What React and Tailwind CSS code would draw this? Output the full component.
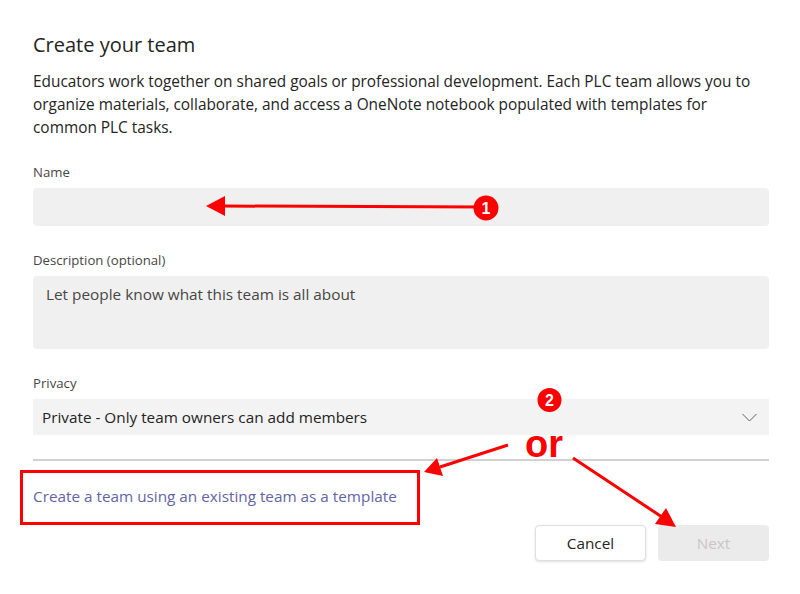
export default function App() {
  const font = { fontFamily: '"Segoe UI", "Open Sans", "Noto Sans", sans-serif' };
  return (
    <div className="relative w-[800px] h-[594px] bg-white overflow-hidden text-[#252423]" style={font}>
      <div className="pl-[33px] pr-[31px] flex flex-col">
        <div className="mt-[31px] text-[20px] leading-[28px] font-normal">Create your team</div>
        <p className="mt-[10.5px] text-[15.4px] leading-[23px] text-[#252423]">
          Educators work together on shared goals or professional development. Each PLC team allows you to organize materials, collaborate, and access a OneNote notebook populated with templates for common PLC tasks.
        </p>
        <label className="mt-[24.5px] text-[13.2px] leading-[18px] text-[#484644]">Name</label>
        <div className="mt-[7px] h-[38px] rounded-[4px] bg-[#f0f0f0]"></div>
        <label className="mt-[25px] text-[13.2px] leading-[18px] text-[#484644]">Description (optional)</label>
        <div className="mt-[7px] h-[73px] rounded-[4px] bg-[#f0f0f0] pl-[13px] pt-[7px] text-[15.35px] leading-[22px] text-[#484644]">
          Let people know what this team is all about
        </div>
        <label className="mt-[25px] text-[13.2px] leading-[18px] text-[#484644]">Privacy</label>
        <div className="mt-[7px] h-[36px] bg-[#f3f3f3] flex items-center justify-between pl-[9px] pr-[12px] text-[15.3px] text-[#252423]">
          <span>Private - Only team owners can add members</span>
          <svg width="15" height="9" viewBox="0 0 15 9" fill="none">
            <path d="M0.5 1 L7.5 8 L14.5 1" stroke="#616161" strokeWidth="1" />
          </svg>
        </div>
        <div className="mt-[24px] h-[2px] bg-[#d1d1d1]"></div>
        <div className="mt-[25px] text-[15.3px] leading-[20px] text-[#6264a7]">Create a team using an existing team as a template</div>
        <div className="mt-[19px] flex justify-end gap-[12px]">
          <button className="w-[111px] h-[36px] rounded-[4px] border border-[#e1dfdd] bg-white text-[15.3px] font-medium text-[#252423] shadow-sm">Cancel</button>
          <button className="w-[111px] h-[36px] rounded-[4px] bg-[#ebebeb] text-[15.3px] font-medium text-[#c8c6c4]">Next</button>
        </div>
      </div>

      {/* Annotations */}
      <div className="absolute left-[20px] top-[470px] w-[400px] h-[55px] border-[3px] border-[#ff0000]"></div>
      <svg className="absolute inset-0" width="800" height="594" viewBox="0 0 800 594">
        <line x1="486" y1="207" x2="222" y2="206" stroke="#ff0000" strokeWidth="3" />
        <polygon points="206,206 225,196 225,216" fill="#ff0000" />
        <circle cx="486" cy="208" r="12.5" fill="#ff0000" />
        <text x="486" y="214" textAnchor="middle" fill="#fff" fontSize="16" fontWeight="bold" fontFamily="Liberation Sans, Arial, sans-serif">1</text>

        <circle cx="549.5" cy="400" r="12" fill="#ff0000" />
        <text x="549.5" y="406" textAnchor="middle" fill="#fff" fontSize="16" fontWeight="bold" fontFamily="Liberation Sans, Arial, sans-serif">2</text>

        <text x="525" y="457" fill="#ff0000" fontSize="38" fontWeight="bold" fontFamily="Liberation Sans, Arial, sans-serif">or</text>

        <line x1="508" y1="445" x2="440" y2="467" stroke="#ff0000" strokeWidth="3" />
        <polygon points="424,472 437,458 443,476" fill="#ff0000" />

        <line x1="573" y1="458" x2="662" y2="517" stroke="#ff0000" strokeWidth="3" />
        <polygon points="676,527 655,524 666,508" fill="#ff0000" />
      </svg>
    </div>
  );
}
